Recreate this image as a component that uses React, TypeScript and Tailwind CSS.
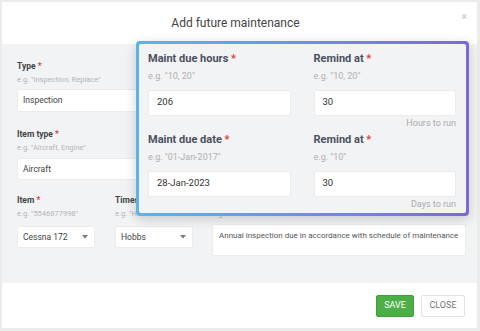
import React from "react";

function Req() {
  return <span className="text-[#e53935]"> *</span>;
}

function BgLabel({ children }: { children: React.ReactNode }) {
  return (
    <div className="whitespace-nowrap text-[8.5px] font-bold leading-[12px] text-[#444]">
      {children}
      <Req />
    </div>
  );
}

function BgHint({ children }: { children: React.ReactNode }) {
  return <div className="mt-[2px] whitespace-nowrap text-[7.5px] leading-[11px] text-[#b5b5b5]">{children}</div>;
}

function Caret() {
  return (
    <svg width="6" height="4" viewBox="0 0 6 4" className="shrink-0">
      <path d="M0 0h6L3 3.5z" fill="#7a7a7a" />
    </svg>
  );
}

function SelectBox({ value }: { value: string }) {
  return (
    <div className="mt-[7px] flex h-[22px] w-[78px] items-center justify-between rounded-[2px] border border-[#ececec] bg-white pl-[5px] pr-[6px] text-[8.5px] text-[#444]">
      <span>{value}</span>
      <Caret />
    </div>
  );
}

function OvField({
  label,
  hint,
  value,
  helper,
}: {
  label: string;
  hint: string;
  value: string;
  helper?: string;
}) {
  return (
    <div className="flex flex-col">
      <div className="whitespace-nowrap text-[11px] font-bold leading-[16px] text-[#4a505e]">
        {label}
        <Req />
      </div>
      <div className="mt-[2px] text-[9px] leading-[14px] text-[#b0b0b0]">{hint}</div>
      <div className="mt-[6.5px] flex h-[26px] items-center rounded-[2px] border border-[#ececec] bg-white pl-[8px] text-[9.5px] text-[#333]">
        {value}
      </div>
      <div className="h-[14px] text-right text-[9px] leading-[14px] text-[#aaa]">{helper}</div>
    </div>
  );
}

export default function App() {
  return (
    <div className="h-[331px] w-[480px] bg-[#ebebeb] p-[2px] font-['Roboto',sans-serif]">
      <div className="relative flex h-[326px] w-[475px] flex-col bg-white">
        {/* header */}
        <div className="relative flex h-[42px] shrink-0 items-center justify-center">
          <h2 className="pr-[8px] text-[12px] text-[#444]">Add future maintenance</h2>
          <span className="absolute right-[10px] top-[7px] text-[11px] text-[#c4c4c4]">×</span>
        </div>

        {/* body */}
        <div className="flex-1 bg-[#f2f3f5] pl-[15px] pr-[11px] pt-[16px]">
          <div className="w-[200px]">
            <BgLabel>Type</BgLabel>
            <BgHint>e.g. "Inspection, Replace"</BgHint>
            <div className="mt-[4px] flex h-[23px] items-center rounded-[2px] border border-[#ececec] bg-white pl-[5px] text-[8.5px] text-[#444]">
              Inspection
            </div>
          </div>

          <div className="mt-[16px] w-[200px]">
            <BgLabel>Item type</BgLabel>
            <BgHint>e.g. "Aircraft, Engine"</BgHint>
            <div className="mt-[5px] flex h-[22px] items-center rounded-[2px] border border-[#ececec] bg-white pl-[5px] text-[8.5px] text-[#444]">
              Aircraft
            </div>
          </div>

          <div className="mt-[14px] flex gap-[20px]">
            <div className="w-[78px]">
              <BgLabel>Item</BgLabel>
              <BgHint>e.g. "5546877998"</BgHint>
              <SelectBox value="Cessna 172" />
            </div>
            <div className="w-[78px]">
              <BgLabel>Timesheet</BgLabel>
              <div className="mt-[2px] flex items-center justify-between whitespace-nowrap text-[7.5px] leading-[11px]">
                <span className="text-[#b5b5b5]">e.g. "Hobbs"</span>
                <span className="text-[8px] text-[#3b8bd0]">106.0</span>
              </div>
              <SelectBox value="Hobbs" />
            </div>
            <div className="ml-[-1px] flex-1">
              <BgLabel>Notes</BgLabel>
              <BgHint>e.g. "Notes"</BgHint>
              <div className="mt-[5px] h-[32px] rounded-[2px] border border-[#ececec] bg-white px-[6px] pt-[5px] text-[8px] leading-[11px] text-[#555]">
                Annual inspection due in accordance with schedule of maintenance
              </div>
            </div>
          </div>
        </div>

        {/* footer */}
        <div className="flex h-[45px] shrink-0 items-center justify-end gap-[7px] pr-[12px]">
          <button className="h-[22px] w-[38px] rounded-[2px] border border-[#3f9f3b] bg-[#4cae47] text-[9px] text-white">
            SAVE
          </button>
          <button className="h-[22px] w-[44px] rounded-[2px] border border-[#e2e2e2] bg-white text-[9px] text-[#777]">
            CLOSE
          </button>
        </div>

        {/* floating panel over the form */}
        <div className="absolute left-[134px] top-[39px] h-[175px] w-[333px] rounded-[4px] bg-linear-to-r from-[#5bb4e6] to-[#7b68d5] p-[3px] shadow-[0_3px_12px_rgba(0,0,0,0.18)]">
          <div className="h-full rounded-[2px] bg-[#f2f3f5] pl-[9px] pr-[10px] pt-[7px]">
            <div className="grid grid-cols-2 gap-x-[23px]">
              <OvField label="Maint due hours" hint={'e.g. "10, 20"'} value="206" />
              <OvField label="Remind at" hint={'e.g. "10, 20"'} value="30" helper="Hours to run" />
            </div>
            <div className="mt-[2.5px] grid grid-cols-2 gap-x-[23px]">
              <OvField label="Maint due date" hint={'e.g. "01-Jan-2017"'} value="28-Jan-2023" />
              <OvField label="Remind at" hint={'e.g. "10"'} value="30" helper="Days to run" />
            </div>
          </div>
        </div>
      </div>
    </div>
  );
}
